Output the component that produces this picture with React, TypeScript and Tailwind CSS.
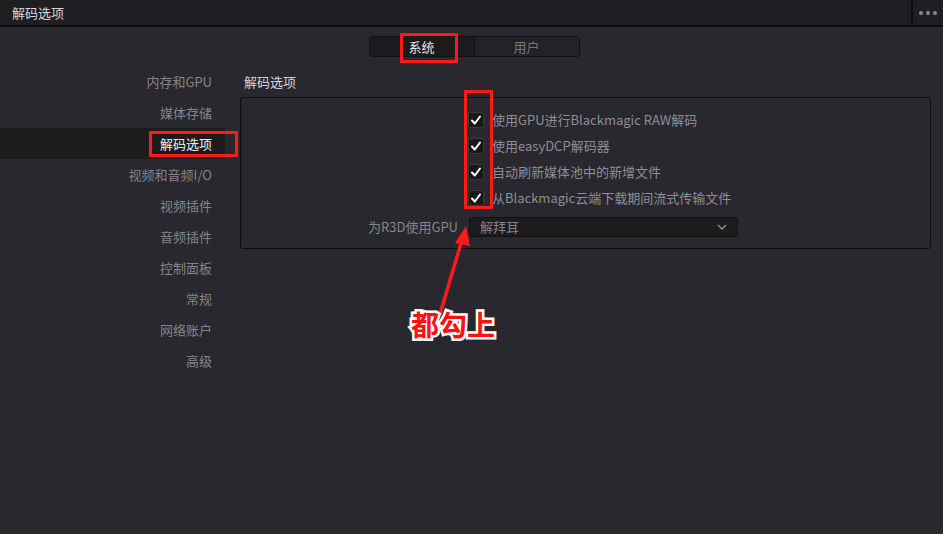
import React from "react";

const menu = [
  "内存和GPU",
  "媒体存储",
  "解码选项",
  "视频和音频I/O",
  "视频插件",
  "音频插件",
  "控制面板",
  "常规",
  "网络账户",
  "高级",
];

const options = [
  "使用GPU进行Blackmagic RAW解码",
  "使用easyDCP解码器",
  "自动刷新媒体池中的新增文件",
  "从Blackmagic云端下载期间流式传输文件",
];

function CheckBox() {
  return (
    <div className="w-[16px] h-[16px] rounded-[2px] bg-[#18181a] border border-[#3a3a3e] flex items-center justify-center">
      <svg width="12" height="12" viewBox="0 0 12 12">
        <path d="M2 6.5 L4.8 9.5 L10 2.5" fill="none" stroke="#ffffff" strokeWidth="2" strokeLinecap="round" strokeLinejoin="round" />
      </svg>
    </div>
  );
}

export default function App() {
  return (
    <div
      className="relative w-[943px] h-[534px] overflow-hidden bg-[#28282e] text-[13px] flex flex-col"
      style={{ fontFamily: '"Noto Sans CJK SC", "Noto Sans", sans-serif' }}
    >
      {/* title bar */}
      <div className="h-[27px] flex items-center bg-[#1f1f23] border-b-2 border-[#0f0f11]">
        <div className="flex-1 pl-[12px] text-[#d8d8dc]">解码选项</div>
        <div className="h-full w-[32px] border-l-2 border-[#0f0f11] flex items-center justify-center gap-[3px]">
          <span className="w-[4px] h-[4px] rounded-full bg-[#8c8c90]" />
          <span className="w-[4px] h-[4px] rounded-full bg-[#8c8c90]" />
          <span className="w-[4px] h-[4px] rounded-full bg-[#8c8c90]" />
        </div>
      </div>

      {/* tabs */}
      <div className="flex justify-center pt-[9px] pl-[5px]">
        <div className="flex h-[21px] border border-[#121214] rounded-[3px] overflow-hidden">
          <div className="w-[105px] bg-[#1b1b1e] text-[#e6e6e8] flex items-center justify-center border-r border-[#121214]">
            系统
          </div>
          <div className="w-[104px] bg-[#232327] text-[#77777c] flex items-center justify-center">
            用户
          </div>
        </div>
      </div>

      <div className="flex pt-[9px]">
        {/* sidebar */}
        <div className="w-[225px] flex flex-col">
          {menu.map((m) => (
            <div
              key={m}
              className={
                m === "解码选项"
                  ? "h-[31px] flex items-center justify-end pr-[13px] bg-[#1c1c1f] text-[#f0f0f2]"
                  : "h-[31px] flex items-center justify-end pr-[13px] text-[#85858a]"
              }
            >
              {m}
            </div>
          ))}
        </div>

        {/* content */}
        <div className="flex-1 pl-[15px] pr-[12px]">
          <div className="h-[31px] flex items-center pl-[4px] text-[#d6d6da]">解码选项</div>
          <div className="h-[152px] border border-[#0e0e10] rounded-[3px] pt-[9px] flex flex-col">
            {options.map((o) => (
              <div key={o} className="h-[26px] flex items-center">
                <div className="w-[227px]" />
                <CheckBox />
                <span className="ml-[8px] text-[#8e8e93]">{o}</span>
              </div>
            ))}
            <div className="h-[31px] flex items-center">
              <div className="w-[217px] text-right text-[#85858a]">为R3D使用GPU</div>
              <div className="ml-[11px] w-[269px] h-[20px] bg-[#1c1c1f] border border-[#121214] rounded-[3px] flex items-center justify-between pl-[10px] pr-[10px] text-[#85858a]">
                <span>解拜耳</span>
                <svg width="10" height="6" viewBox="0 0 10 6">
                  <path d="M1 1 L5 5 L9 1" fill="none" stroke="#8c8c90" strokeWidth="1.5" />
                </svg>
              </div>
            </div>
          </div>
        </div>
      </div>

      {/* annotations */}
      <div className="absolute left-[400px] top-[33px] w-[58px] h-[30px] border-[3px] border-[#ff1a1a]" />
      <div className="absolute left-[149px] top-[131px] w-[89px] h-[26px] border-[3px] border-[#ff1a1a]" />
      <div className="absolute left-[464px] top-[90px] w-[29px] h-[119px] border-[3px] border-[#ff1a1a]" />
      <svg className="absolute left-0 top-0" width="943" height="534">
        <line x1="440" y1="314" x2="462" y2="240" stroke="#ff1a1a" strokeWidth="3.5" />
        <polygon points="466,226 455,243 470,246" fill="#ff1a1a" />
      </svg>
      <div
        className="absolute left-[411px] top-[310px] text-[28px] font-bold text-[#ff1010] leading-none [paint-order:stroke_fill] [-webkit-text-stroke:5px_#ffffff]"
      >
        都勾上
      </div>
    </div>
  );
}
